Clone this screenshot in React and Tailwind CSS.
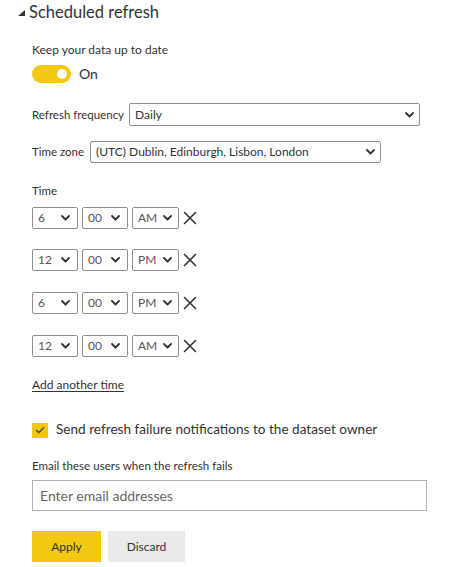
import React from "react";

const Chevron = ({ className = "" }) => (
  <svg width="9" height="6" viewBox="0 0 9 6" className={className}>
    <polyline points="1,1 4.5,4.5 8,1" fill="none" stroke="#333" strokeWidth="1.8" strokeLinecap="round" strokeLinejoin="round" />
  </svg>
);

const Select = ({ value, w, h = "h-[22px]", text = "text-[#555]", pr = "pr-[5px]" }) => (
  <div className={`${w} ${h} ${pr} flex items-center justify-between border border-[#8f8f8f] rounded-[2px] pl-[5px] bg-white shrink-0`}>
    <span className={`text-[12px] leading-none ${text}`}>{value}</span>
    <Chevron />
  </div>
);

const XIcon = () => (
  <svg width="14" height="14" viewBox="0 0 14 14" className="ml-[4px]">
    <path d="M1.5 1.5 L12.5 12.5 M12.5 1.5 L1.5 12.5" stroke="#333" strokeWidth="1.6" strokeLinecap="round" />
  </svg>
);

const TimeRow = ({ h, ap, mt }) => (
  <div className={`flex items-center ${mt}`}>
    <Select value={h} w="w-[46px]" pr="pr-[7px]" />
    <div className="w-[4px]" />
    <Select value="00" w="w-[46px]" pr="pr-[7px]" />
    <div className="w-[4px]" />
    <Select value={ap} w="w-[47px]" pr="pr-[6px]" />
    <XIcon />
  </div>
);

export default function App() {
  return (
    <div
      className="w-[474px] h-[567px] bg-white text-[#333] overflow-hidden"
      style={{ fontFamily: '"Segoe UI", Lato, "Open Sans", sans-serif' }}
    >
      <div className="h-[24px] flex items-center">
        <svg width="7" height="6" viewBox="0 0 7 6" className="ml-[18px] mt-[1px]">
          <polygon points="7,0 7,6 0,6" fill="#333" />
        </svg>
        <span className="ml-[4px] text-[16.5px] leading-[24px] text-[#333]">Scheduled refresh</span>
      </div>

      <div className="pl-[32px]">
        <div className="mt-[18px] text-[12px] leading-[16px]">Keep your data up to date</div>

        <div className="mt-[7px] flex items-center h-[18px]">
          <div className="w-[39px] h-[18px] rounded-full bg-[#f2c811] flex items-center justify-end pr-[4px]">
            <div className="w-[10px] h-[10px] rounded-full bg-white" />
          </div>
          <span className="ml-[8px] text-[14px] leading-none">On</span>
        </div>

        <div className="mt-[20px] flex items-center h-[23px]">
          <span className="text-[11.5px] leading-none mr-[5px]">Refresh frequency</span>
          <Select value="Daily" w="w-[291px]" h="h-[23px]" text="text-[#333]" pr="pr-[5px]" />
        </div>

        <div className="mt-[15px] flex items-center h-[22px]">
          <span className="text-[11.5px] leading-none mr-[6px]">Time zone</span>
          <Select value="(UTC) Dublin, Edinburgh, Lisbon, London" w="w-[291px]" text="text-[#333]" pr="pr-[5px]" />
        </div>

        <div className="mt-[20px] text-[11.5px] leading-[16px]">Time</div>

        <TimeRow h="6" ap="AM" mt="mt-[8px]" />
        <TimeRow h="12" ap="PM" mt="mt-[20px]" />
        <TimeRow h="6" ap="PM" mt="mt-[21px]" />
        <TimeRow h="12" ap="AM" mt="mt-[21px]" />

        <div className="mt-[20px] text-[12px] leading-[16px]">
          <span className="underline underline-offset-2">Add another time</span>
        </div>

        <div className="mt-[29px] flex items-center h-[16px]">
          <div className="w-[16px] h-[15px] bg-[#f2c811] flex items-center justify-center">
            <svg width="10" height="8" viewBox="0 0 10 8">
              <polyline points="1,4 3.8,6.6 9,1.2" fill="none" stroke="#444" strokeWidth="1.3" />
            </svg>
          </div>
          <span className="ml-[8px] text-[13.6px] leading-none text-[#333]">Send refresh failure notifications to the dataset owner</span>
        </div>

        <div className="mt-[20px] text-[11.6px] leading-[16px]">Email these users when the refresh fails</div>

        <div className="mt-[6px] w-[395px] h-[31px] border border-[#b3b3b3] flex items-center pl-[7px]">
          <span className="text-[14px] leading-none text-[#666]">Enter email addresses</span>
        </div>

        <div className="mt-[20px] flex gap-[7px]">
          <div className="w-[69px] h-[31px] bg-[#f2c811] flex items-center justify-center text-[12px] text-[#333]">Apply</div>
          <div className="w-[77px] h-[31px] bg-[#eaeaea] flex items-center justify-center text-[12px] text-[#333]">Discard</div>
        </div>
      </div>
    </div>
  );
}
